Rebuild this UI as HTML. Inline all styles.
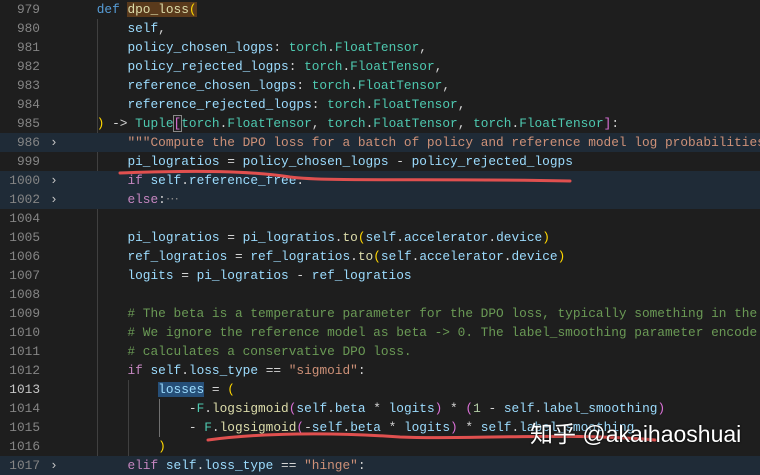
<!DOCTYPE html>
<html><head><meta charset="utf-8"><style>
body{margin:0;width:760px;height:463px;background:#1e1e1e;overflow:hidden;position:relative;font-family:"Liberation Mono",monospace;font-size:12.8px;}
.l{position:absolute;left:0;width:760px;height:19px;line-height:19px;white-space:pre;}
.n{position:absolute;left:0;width:40px;text-align:right;color:#858585;}
.c{position:absolute;left:66px;color:#d4d4d4;}
.hl{background:#1f2b37;}
.f{position:absolute;left:50px;color:#c5c5c5;font-size:13px;}
.k{color:#569cd6}.fn{color:#dcdcaa}.v{color:#9cdcfe}.t{color:#4ec9b0}.cm{color:#6a9955}.p{color:#c586c0}.s{color:#ce9178}.nu{color:#b5cea8}
.y{color:#ffd700}.pu{color:#da70d6}.b{color:#179fff}
.g{position:absolute;width:1px;background:#404040;}
</style></head><body>
<div class="g" style="left:97px;top:19px;height:444px"></div>
<div class="g" style="left:128px;top:380px;height:76px"></div>
<div class="g" style="left:159px;top:399px;height:38px;background:#707070"></div>

<div class="l" style="top:0"><span class="n">979</span><span class="c">    <span class="k">def</span> <span class="fn" style="background:#5a3a1c">dpo_loss</span><span class="y" style="background:#5a3a1c">(</span></span></div>
<div class="l" style="top:19px"><span class="n">980</span><span class="c">        <span class="v">self</span>,</span></div>
<div class="l" style="top:38px"><span class="n">981</span><span class="c">        <span class="v">policy_chosen_logps</span>: <span class="t">torch</span>.<span class="t">FloatTensor</span>,</span></div>
<div class="l" style="top:57px"><span class="n">982</span><span class="c">        <span class="v">policy_rejected_logps</span>: <span class="t">torch</span>.<span class="t">FloatTensor</span>,</span></div>
<div class="l" style="top:76px"><span class="n">983</span><span class="c">        <span class="v">reference_chosen_logps</span>: <span class="t">torch</span>.<span class="t">FloatTensor</span>,</span></div>
<div class="l" style="top:95px"><span class="n">984</span><span class="c">        <span class="v">reference_rejected_logps</span>: <span class="t">torch</span>.<span class="t">FloatTensor</span>,</span></div>
<div class="l" style="top:114px"><span class="n">985</span><span class="c">    <span class="y">)</span> -&gt; <span class="t">Tuple</span><span class="pu" style="outline:1px solid #888">[</span><span class="t">torch</span>.<span class="t">FloatTensor</span>, <span class="t">torch</span>.<span class="t">FloatTensor</span>, <span class="t">torch</span>.<span class="t">FloatTensor</span><span class="pu">]</span>:</span></div>
<div class="l hl" style="top:133px"><span class="n">986</span><span class="f">›</span><span class="c">        <span class="s">"""Compute the DPO loss for a batch of policy and reference model log probabilities</span></span></div>
<div class="l" style="top:152px"><span class="n">999</span><span class="c">        <span class="v">pi_logratios</span> = <span class="v">policy_chosen_logps</span> - <span class="v">policy_rejected_logps</span></span></div>
<div class="l hl" style="top:171px"><span class="n">1000</span><span class="f">›</span><span class="c">        <span class="p">if</span> <span class="v">self</span>.<span class="v">reference_free</span>:</span></div>
<div class="l hl" style="top:190px"><span class="n">1002</span><span class="f">›</span><span class="c">        <span class="p">else</span>:<span style="color:#888">⋯</span></span></div>
<div class="l" style="top:209px"><span class="n">1004</span></div>
<div class="l" style="top:228px"><span class="n">1005</span><span class="c">        <span class="v">pi_logratios</span> = <span class="v">pi_logratios</span>.<span class="fn">to</span><span class="y">(</span><span class="v">self</span>.<span class="v">accelerator</span>.<span class="v">device</span><span class="y">)</span></span></div>
<div class="l" style="top:247px"><span class="n">1006</span><span class="c">        <span class="v">ref_logratios</span> = <span class="v">ref_logratios</span>.<span class="fn">to</span><span class="y">(</span><span class="v">self</span>.<span class="v">accelerator</span>.<span class="v">device</span><span class="y">)</span></span></div>
<div class="l" style="top:266px"><span class="n">1007</span><span class="c">        <span class="v">logits</span> = <span class="v">pi_logratios</span> - <span class="v">ref_logratios</span></span></div>
<div class="l" style="top:285px"><span class="n">1008</span></div>
<div class="l" style="top:304px"><span class="n">1009</span><span class="c cm">        # The beta is a temperature parameter for the DPO loss, typically something in the</span></div>
<div class="l" style="top:323px"><span class="n">1010</span><span class="c cm">        # We ignore the reference model as beta -&gt; 0. The label_smoothing parameter encode</span></div>
<div class="l" style="top:342px"><span class="n">1011</span><span class="c cm">        # calculates a conservative DPO loss.</span></div>
<div class="l" style="top:361px"><span class="n">1012</span><span class="c">        <span class="p">if</span> <span class="v">self</span>.<span class="v">loss_type</span> == <span class="s">"sigmoid"</span>:</span></div>
<div class="l" style="top:380px"><span class="n" style="color:#c6c6c6">1013</span><span class="c">            <span class="v" style="background:#264f78">losses</span> = <span class="y">(</span></span></div>
<div class="l" style="top:399px"><span class="n">1014</span><span class="c">                -<span class="t">F</span>.<span class="fn">logsigmoid</span><span class="pu">(</span><span class="v">self</span>.<span class="v">beta</span> * <span class="v">logits</span><span class="pu">)</span> * <span class="pu">(</span><span class="nu">1</span> - <span class="v">self</span>.<span class="v">label_smoothing</span><span class="pu">)</span></span></div>
<div class="l" style="top:418px"><span class="n">1015</span><span class="c">                - <span class="t">F</span>.<span class="fn">logsigmoid</span><span class="pu">(</span>-<span class="v">self</span>.<span class="v">beta</span> * <span class="v">logits</span><span class="pu">)</span> * <span class="v">self</span>.<span class="v">label_smoothing</span></span></div>
<div class="l" style="top:437px"><span class="n">1016</span><span class="c">            <span class="y">)</span></span></div>
<div class="l hl" style="top:456px"><span class="n">1017</span><span class="f">›</span><span class="c">        <span class="p">elif</span> <span class="v">self</span>.<span class="v">loss_type</span> == <span class="s">"hinge"</span>:</span></div>

<svg style="position:absolute;left:0;top:0" width="760" height="463">
<path d="M120 173 C200 170 250 171 290 177 C330 182 420 178 570 181" stroke="#e0504f" stroke-width="3" fill="none" stroke-linecap="round"/>
<path d="M208 440 C260 433 330 432 400 437 C470 440 560 432 655 440" stroke="#e0504f" stroke-width="3" fill="none" stroke-linecap="round"/>
</svg>
<div style="position:absolute;left:530px;top:415px;font-family:'Liberation Sans','Noto Sans CJK SC',sans-serif;font-size:23px;color:#fff;text-shadow:0 0 2px #000;white-space:nowrap">知乎 @akaihaoshuai</div>
</body></html>
